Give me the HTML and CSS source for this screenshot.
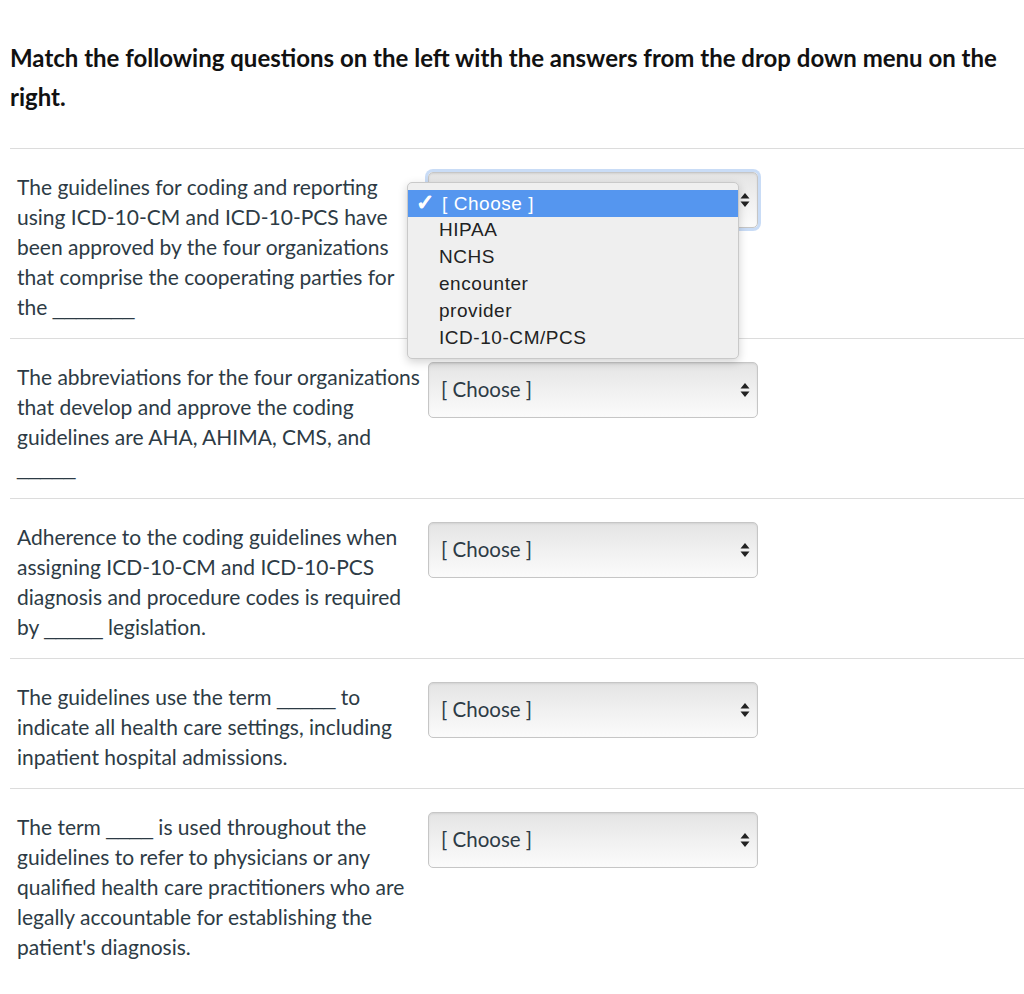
FILE: index.html
```html
<!DOCTYPE html>
<html lang="en">
<head>
<meta charset="utf-8">
<title>Matching question</title>
<link rel="stylesheet" href="styles.css">
</head>
<body>
<div class="page">
  <h2 class="title">Match the following questions on the left with the answers from the drop down menu on the right.</h2>

  <div class="rows">
    <div class="row">
      <div class="q">The guidelines for coding and reporting using ICD-10-CM and ICD-10-PCS have been approved by the four organizations that comprise the cooperating parties for the <span class="blank">_______</span></div>
      <div class="answer">
        <div class="select focused">
          <span class="sel-text"></span>
          <svg class="arrows" width="10" height="16" viewBox="0 0 10 16"><path d="M5 1 L9.5 6.5 H0.5 Z M5 15 L9.5 9.5 H0.5 Z" fill="#222"/></svg>
        </div>
        <ul class="menu">
          <li class="item active"><span class="check">✓</span>[ Choose ]</li>
          <li class="item">HIPAA</li>
          <li class="item">NCHS</li>
          <li class="item">encounter</li>
          <li class="item">provider</li>
          <li class="item">ICD-10-CM/PCS</li>
        </ul>
      </div>
    </div>

    <div class="row">
      <div class="q">The abbreviations for the four organizations that develop and approve the coding guidelines are AHA, AHIMA, CMS, and <span class="blank">_____</span></div>
      <div class="answer">
        <div class="select">
          <span class="sel-text">[ Choose ]</span>
          <svg class="arrows" width="10" height="16" viewBox="0 0 10 16"><path d="M5 1 L9.5 6.5 H0.5 Z M5 15 L9.5 9.5 H0.5 Z" fill="#222"/></svg>
        </div>
      </div>
    </div>

    <div class="row">
      <div class="q">Adherence to the coding guidelines when assigning ICD-10-CM and ICD-10-PCS diagnosis and procedure codes is required by <span class="blank">_____</span> legislation.</div>
      <div class="answer">
        <div class="select">
          <span class="sel-text">[ Choose ]</span>
          <svg class="arrows" width="10" height="16" viewBox="0 0 10 16"><path d="M5 1 L9.5 6.5 H0.5 Z M5 15 L9.5 9.5 H0.5 Z" fill="#222"/></svg>
        </div>
      </div>
    </div>

    <div class="row">
      <div class="q">The guidelines use the term <span class="blank">_____</span> to indicate all health care settings, including inpatient hospital admissions.</div>
      <div class="answer">
        <div class="select">
          <span class="sel-text">[ Choose ]</span>
          <svg class="arrows" width="10" height="16" viewBox="0 0 10 16"><path d="M5 1 L9.5 6.5 H0.5 Z M5 15 L9.5 9.5 H0.5 Z" fill="#222"/></svg>
        </div>
      </div>
    </div>

    <div class="row">
      <div class="q">The term <span class="blank">____</span> is used throughout the guidelines to refer to physicians or any qualified health care practitioners who are legally accountable for establishing the patient's diagnosis.</div>
      <div class="answer">
        <div class="select">
          <span class="sel-text">[ Choose ]</span>
          <svg class="arrows" width="10" height="16" viewBox="0 0 10 16"><path d="M5 1 L9.5 6.5 H0.5 Z M5 15 L9.5 9.5 H0.5 Z" fill="#222"/></svg>
        </div>
      </div>
    </div>
  </div>
</div>
</body>
</html>
```

FILE: styles.css
```css
* { box-sizing: border-box; }

html, body {
  margin: 0;
  padding: 0;
  background: #ffffff;
}

body {
  font-family: Lato, "Open Sans", sans-serif;
  color: #2d3b45;
}

.page {
  padding: 38px 0 0 10px;
}

.title {
  margin: 0 0 32px 0;
  font-size: 24px;
  line-height: 39px;
  font-weight: 700;
  color: #111111;
}

.rows {
  border-top: 1px solid #dcdcdc;
}

.row {
  display: grid;
  grid-template-columns: 406px 330px;
  column-gap: 5px;
  padding: 23px 0 16px 7px;
  border-bottom: 1px solid #dcdcdc;
}

.row:last-child {
  border-bottom: none;
}

.q {
  font-size: 21px;
  line-height: 30px;
}

.blank {
  font-family: "Liberation Sans", Arial, sans-serif;
  font-size: 21px;
  line-height: 1;
  vertical-align: baseline;
}

.answer {
  position: relative;
}

.select {
  position: relative;
  height: 56px;
  border: 1px solid #c6c6c6;
  border-radius: 5px;
  background: linear-gradient(to bottom, #e4e4e4 0%, #efefef 45%, #fbfbfb 100%);
  box-shadow: inset 0 1px 2px rgba(0,0,0,0.08);
  display: flex;
  align-items: center;
  padding-left: 12px;
}

.select.focused {
  box-shadow: 0 0 0 3px #c9dcf6, inset 0 1px 2px rgba(0,0,0,0.08);
}

.sel-text {
  font-size: 20.5px;
  color: #2d3b45;
  margin-top: -2px;
}

.arrows {
  position: absolute;
  right: 7px;
  top: 50%;
  margin-top: -8px;
}

.menu {
  position: absolute;
  left: -21px;
  top: 10px;
  width: 332px;
  margin: 0;
  padding: 7px 0 6px 0;
  list-style: none;
  background: #efefef;
  border: 1px solid #c9c9c9;
  border-radius: 5px;
  box-shadow: 0 3px 10px rgba(0,0,0,0.18);
  z-index: 10;
}

.item {
  height: 27px;
  line-height: 25px;
  padding-left: 31px;
  font-family: "Liberation Sans", Arial, sans-serif;
  font-size: 19px;
  color: #222222;
  letter-spacing: 0.55px;
}

.item.active {
  background: #5596ef;
  color: #ffffff;
  padding-left: 8px;
}

.check {
  display: inline-block;
  width: 26px;
  font-family: "DejaVu Sans", sans-serif;
  font-size: 22px;
  font-weight: 700;
  -webkit-text-stroke: 1.2px #ffffff;
}
```
